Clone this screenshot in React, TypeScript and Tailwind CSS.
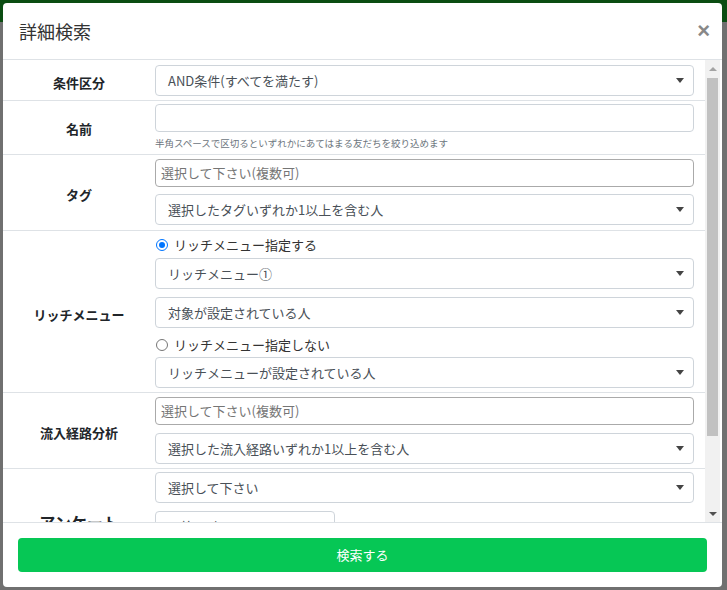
import React from 'react';

const jp = { fontFamily: '"Noto Sans CJK JP", "Noto Sans", sans-serif' };

function Caret() {
  return (
    <svg width="8" height="5" viewBox="0 0 8 5" className="shrink-0">
      <path d="M0 0 H8 L4 5 Z" fill="#444" />
    </svg>
  );
}

function Select({ value }: { value: string }) {
  return (
    <div className="flex h-[31px] items-center justify-between rounded-[4px] border border-[#ced4da] bg-white pl-3 pr-[9px] text-[13px] text-[#495057]">
      <span>{value}</span>
      <Caret />
    </div>
  );
}

function Multi({ placeholder }: { placeholder: string }) {
  return (
    <div className="flex h-[28px] items-center rounded-[4px] border border-[#aaa] bg-white pl-[5px] text-[13px] text-[#757575]">
      {placeholder}
    </div>
  );
}

function Radio({ checked, label }: { checked?: boolean; label: string }) {
  return (
    <div className="flex h-[16px] items-center gap-[6px] pl-[1px] text-[13px] text-[#333]">
      {checked ? (
        <span className="flex h-[12px] w-[12px] items-center justify-center rounded-full border border-[#0075ff]">
          <span className="h-[6px] w-[6px] rounded-full bg-[#0075ff]" />
        </span>
      ) : (
        <span className="h-[12px] w-[12px] rounded-full border border-[#767676]" />
      )}
      <span>{label}</span>
    </div>
  );
}

function Row({ label, children, className = '', labelClass = 'text-[13px]' }: { label: string; children: React.ReactNode; className?: string; labelClass?: string }) {
  return (
    <div className={`flex border-b border-[#dee2e6] ${className}`}>
      <div className={`flex w-[152px] shrink-0 items-center justify-center font-bold text-[#212529] ${labelClass}`}>
        {label}
      </div>
      <div className="flex flex-1 flex-col pr-[11px]">{children}</div>
    </div>
  );
}

export default function App() {
  return (
    <div className="relative h-[590px] w-[727px] overflow-hidden bg-[#707070]" style={jp}>
      <div className="absolute left-0 top-0 h-[22px] w-full bg-[#0b4d12]" />
      <div className="relative ml-[3px] mt-[3px] flex h-[584px] w-[719px] flex-col overflow-hidden rounded-[4px] bg-white">
        {/* header */}
        <div className="flex h-[57px] shrink-0 items-center justify-between border-b border-[#dee2e6] pl-4 pr-[12px]">
          <h1 className="text-[18px] font-normal text-[#333]">詳細検索</h1>
          <span className="text-[22px] font-bold leading-none text-[#888]" style={{ fontFamily: '"Liberation Sans", sans-serif' }}>×</span>
        </div>

        {/* body */}
        <div className="flex h-[462px] shrink-0 overflow-hidden pr-[2px]">
          <div className="flex-1 overflow-hidden">
            <Row label="条件区分" className="h-[41px] pt-[5px]">
              <Select value="AND条件(すべてを満たす)" />
            </Row>
            <Row label="名前" className="h-[54px] pt-[3px]">
              <div className="h-[28px] rounded-[4px] border border-[#ced4da] bg-white" />
              <div className="mt-[4px] text-[9.5px] text-[#6c757d]">半角スペースで区切るといずれかにあてはまる友だちを絞り込めます</div>
            </Row>
            <Row label="タグ" className="h-[76px] pt-[4px]">
              <Multi placeholder="選択して下さい(複数可)" />
              <div className="mt-[7px]">
                <Select value="選択したタグいずれか1以上を含む人" />
              </div>
            </Row>
            <Row label="リッチメニュー" className="h-[162px] pt-[6px]">
              <Radio checked label="リッチメニュー指定する" />
              <div className="mt-[5px]">
                <Select value="リッチメニュー①" />
              </div>
              <div className="mt-[8px]">
                <Select value="対象が設定されている人" />
              </div>
              <div className="mt-[9px]">
                <Radio label="リッチメニュー指定しない" />
              </div>
              <div className="mt-[4px]">
                <Select value="リッチメニューが設定されている人" />
              </div>
            </Row>
            <Row label="流入経路分析" className="h-[76px] pt-[4px]">
              <Multi placeholder="選択して下さい(複数可)" />
              <div className="mt-[8px]">
                <Select value="選択した流入経路いずれか1以上を含む人" />
              </div>
            </Row>
            <Row label="アンケート" className="h-[104px] pt-[3px]" labelClass="text-[16px]">
              <Select value="選択して下さい" />
              <div className="mt-[8px] flex items-start gap-4">
                <div className="flex h-[31px] w-[180px] items-center rounded-[4px] border border-[#ced4da] pl-3 text-[13px] text-[#495057]">
                  回答日時
                </div>
                <span className="pt-[6px] text-[13px] text-[#495057]">から　　　　　　　　まで</span>
              </div>
            </Row>
          </div>
          {/* scrollbar */}
          <div className="flex w-[15px] shrink-0 flex-col bg-[#f1f1f1]">
            <div className="flex h-[18px] items-center justify-center">
              <svg width="8" height="4" viewBox="0 0 8 4"><path d="M0 4 L4 0 L8 4 Z" fill="#a3a3a3" /></svg>
            </div>
            <div className="mx-[2px] h-[358px] bg-[#c1c1c1]" />
            <div className="flex-1" />
            <div className="flex h-[17px] items-center justify-center">
              <svg width="8" height="4" viewBox="0 0 8 4"><path d="M0 0 H8 L4 4 Z" fill="#505050" /></svg>
            </div>
          </div>
        </div>

        {/* footer */}
        <div className="flex flex-1 items-center border-t border-[#dee2e6] px-[15px]">
          <button className="h-[34px] w-full rounded-[4px] bg-[#06c755] text-[13px] text-white">検索する</button>
        </div>
      </div>
    </div>
  );
}
